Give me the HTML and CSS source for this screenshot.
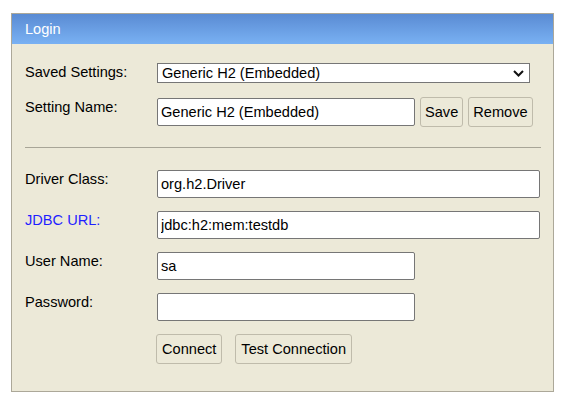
FILE: index.html
```html
<!DOCTYPE html>
<html>
<head>
<meta charset="utf-8">
<title>Login</title>
<link rel="stylesheet" href="styles.css">
</head>
<body>
<div class="panel">
  <div class="head">Login</div>
  <div class="body">
    <div class="row r-select">
      <label class="lbl">Saved Settings:</label>
      <div class="select-wrap">
        <select class="sel"><option>Generic H2 (Embedded)</option></select>
        <svg class="chev" width="11" height="7" viewBox="0 0 11 7"><path d="M1 1 L5.5 5.5 L10 1" fill="none" stroke="#111" stroke-width="2"/></svg>
      </div>
    </div>
    <div class="row r-name">
      <label class="lbl">Setting Name:</label>
      <input class="inp short" type="text" value="Generic H2 (Embedded)">
      <button class="btn">Save</button>
      <button class="btn">Remove</button>
    </div>
    <hr class="sep">
    <div class="row">
      <label class="lbl">Driver Class:</label>
      <input class="inp long" type="text" value="org.h2.Driver">
    </div>
    <div class="row">
      <label class="lbl link">JDBC URL:</label>
      <input class="inp long" type="text" value="jdbc:h2:mem:testdb">
    </div>
    <div class="row">
      <label class="lbl">User Name:</label>
      <input class="inp short" type="text" value="sa">
    </div>
    <div class="row">
      <label class="lbl">Password:</label>
      <input class="inp short" type="password" value="">
    </div>
    <div class="row r-actions">
      <span class="lbl"></span>
      <button class="btn">Connect</button>
      <button class="btn btn-gap">Test Connection</button>
    </div>
  </div>
</div>
</body>
</html>
```

FILE: styles.css
```css
html, body {
  margin: 0;
  padding: 0;
  background: #ffffff;
}
body {
  font-family: "Liberation Sans", Arial, sans-serif;
  font-size: 14.6px;
  color: #000;
}
.panel {
  margin: 13px 0 0 11px;
  width: 543px;
  height: 379px;
  box-sizing: border-box;
  border: 1px solid #aca899;
  background: #ece9d8;
}
.head {
  height: 30px;
  line-height: 30px;
  padding-left: 13px;
  color: #ffffff;
  background: linear-gradient(to bottom, #5a8bd3, #79b1f3);
}
.body {
  padding: 19px 12px 0 13px;
}
.row {
  display: flex;
  align-items: flex-start;
  margin-bottom: 13px;
}
.lbl {
  flex: 0 0 132px;
  padding-top: 1px;
  line-height: 17px;
}
.link {
  color: #1f1fff;
}
.r-select {
  margin-bottom: 14px;
}
.r-name {
  align-items: center;
  margin-bottom: 0;
}
.r-name .lbl {
  align-self: flex-start;
  padding-top: 2px;
}
.select-wrap {
  position: relative;
  width: 373px;
  height: 20px;
}
.sel {
  -webkit-appearance: none;
  appearance: none;
  width: 100%;
  height: 20px;
  box-sizing: border-box;
  border: 1px solid #767676;
  border-radius: 0;
  background: #fff;
  font: inherit;
  color: #000;
  padding: 0 0 0 4px;
  margin: 0;
}
.chev {
  position: absolute;
  right: 6px;
  top: 7px;
  pointer-events: none;
}
.inp {
  height: 28px;
  box-sizing: border-box;
  border: 1px solid #767676;
  border-radius: 2px;
  background: #fff;
  font: inherit;
  color: #000;
  padding: 0 3px;
  margin: 0;
}
.short {
  width: 258px;
}
.long {
  width: 383px;
}
.btn {
  height: 30px;
  box-sizing: border-box;
  border: 1px solid #bfbbab;
  border-radius: 3px;
  background: #ece9d8;
  font: inherit;
  color: #000;
  padding: 0 4px;
  margin: 0 0 0 5px;
}
.r-actions .btn {
  margin-left: 0;
  padding: 0 5px;
}
.r-actions .lbl {
  flex-basis: 131px;
}
.r-actions .btn-gap {
  margin-left: 13px;
}
.sep {
  border: 0;
  border-top: 1px solid #a8a597;
  height: 0;
  margin: 20px 0 22px 0;
}
```
